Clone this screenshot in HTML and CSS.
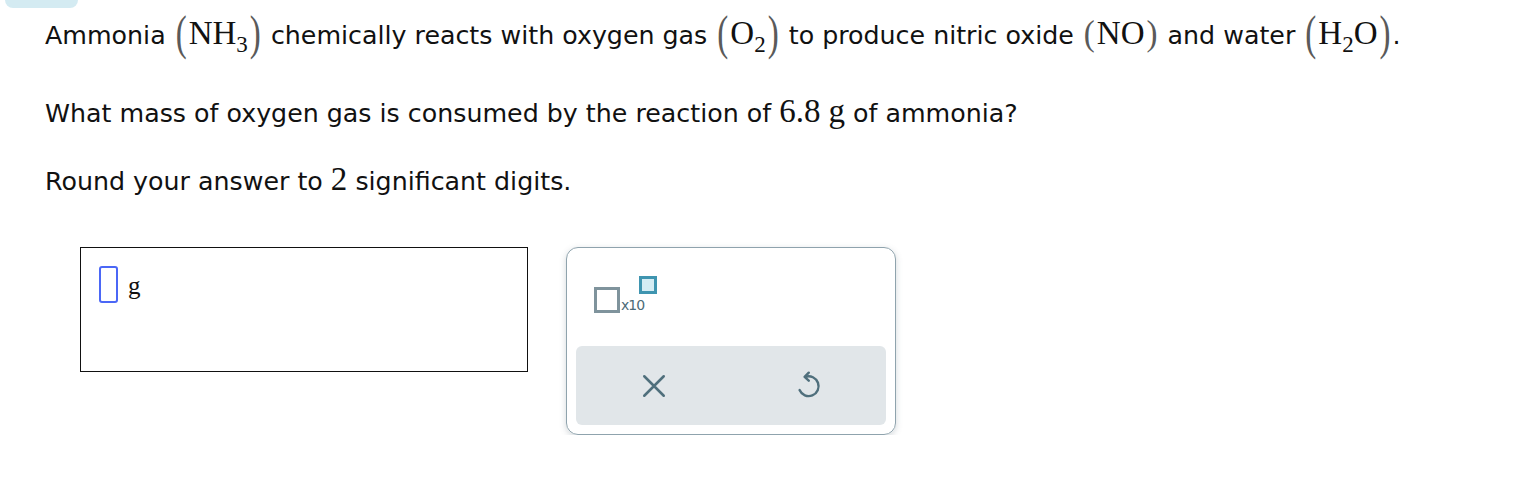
FILE: index.html
```html
<!DOCTYPE html>
<html>
<head>
<meta charset="utf-8">
<link rel="stylesheet" href="styles.css">
</head>
<body>
<div class="tab"></div>
<div class="content">
  <p class="line line1">Ammonia <span class="m"><span class="paren">(</span>NH<sub>3</sub><span class="paren">)</span></span> chemically reacts with oxygen gas <span class="m"><span class="paren">(</span>O<sub>2</sub><span class="paren">)</span></span> to produce nitric oxide <span class="m"><span class="paren sm">(</span>NO<span class="paren sm">)</span></span> and water <span class="m"><span class="paren">(</span>H<sub>2</sub>O<span class="paren">)</span></span>.</p>
  <p class="line line2">What mass of oxygen gas is consumed by the reaction of <span class="m">6.8</span> <span class="m">g</span> of ammonia?</p>
  <p class="line line3">Round your answer to <span class="m">2</span> significant digits.</p>
  <div class="answer-row">
    <div class="answer-box">
      <span class="slot"></span><span class="unit">g</span>
    </div>
    <div class="palette">
      <div class="palette-top">
        <span class="sci"><span class="sq"></span><span class="x10">x10</span><span class="sup-sq"></span></span>
      </div>
      <div class="palette-actions">
        <div class="act"><svg width="26" height="26" viewBox="0 0 24 24"><path d="M3 3 L21 21 M21 3 L3 21" fill="none" stroke="#4f6f7c" stroke-width="2.3" stroke-linecap="round"/></svg></div>
        <div class="act"><svg width="29" height="29" viewBox="0 0 24 24"><path d="M9.5 4.8 A8.2 8.2 0 1 1 4.6 15.8" fill="none" stroke="#4f6f7c" stroke-width="2" stroke-linecap="round"/><path d="M12.2 1.4 L8.8 4.8 L12.2 8" fill="none" stroke="#4f6f7c" stroke-width="2" stroke-linecap="round" stroke-linejoin="round"/></svg></div>
      </div>
    </div>
  </div>
</div>
</body>
</html>
```
FILE: styles.css
```css
html, body {
  margin: 0;
  padding: 0;
  background: #fff;
}
body {
  font-family: "DejaVu Sans", Verdana, sans-serif;
  color: #111;
}
.tab {
  margin-left: 5px;
  width: 73px;
  height: 8px;
  background: #d4ebf2;
  border-radius: 0 0 9px 9px;
}
.content {
  padding-left: 45px;
}
.line {
  margin: 0;
  font-size: 25.3px;
  white-space: nowrap;
}
.line1 {
  height: 58px;
  line-height: 50px;
  margin-top: 0;
}
.line2 {
  margin-top: 30px;
  line-height: 30px;
}
.line3 {
  margin-top: 35px;
  line-height: 30px;
}
.m {
  font-family: "Liberation Serif", "Times New Roman", serif;
  font-size: 33px;
}
.m sub {
  font-size: 23px;
  vertical-align: -8px;
  line-height: 0;
}
.paren {
  display: inline-block;
  color: #5a5a5a;
  transform: scaleY(1.45);
  margin: 0 2px;
}
.paren.sm {
  transform: scaleY(1.1);
}
.answer-row {
  display: flex;
  align-items: flex-start;
  gap: 38px;
  margin-top: 50px;
  margin-left: 35px;
}
.answer-box {
  width: 448px;
  height: 125px;
  border: 1px solid #111;
  display: flex;
  align-items: flex-start;
  padding: 18px 0 0 18px;
  box-sizing: border-box;
}
.slot {
  width: 19px;
  height: 37px;
  border: 2px solid #4b67f6;
  border-radius: 3px;
  box-sizing: border-box;
}
.unit {
  font-family: "Liberation Serif", "Times New Roman", serif;
  font-size: 25px;
  margin-left: 10px;
  margin-top: 6px;
}
.palette {
  width: 330px;
  height: 188px;
  border: 1px solid #8fa3ad;
  border-radius: 12px;
  box-sizing: border-box;
  box-shadow: 0 2px 6px rgba(80, 100, 110, 0.25);
  padding: 0 9px 9px 9px;
  display: flex;
  flex-direction: column;
}
.palette-top {
  height: 98px;
  padding: 28px 0 0 18px;
  box-sizing: border-box;
}
.sci {
  display: inline-flex;
  align-items: flex-end;
}
.sq {
  width: 26px;
  height: 26px;
  border: 3px solid #7f939c;
  box-sizing: border-box;
  margin-top: 11px;
}
.x10 {
  font-family: "DejaVu Sans", sans-serif;
  font-size: 14px;
  letter-spacing: -1px;
  color: #4c6b78;
  line-height: 14px;
  margin-left: 1px;
  margin-bottom: 1px;
}
.sup-sq {
  width: 18px;
  height: 18px;
  border: 3px solid #3f95b0;
  background: #d5edf4;
  box-sizing: border-box;
  align-self: flex-start;
  margin-left: -5px;
}
.palette-actions {
  flex: 1;
  background: #e1e6e9;
  border-radius: 6px;
  display: flex;
  align-items: center;
}
.act {
  flex: 1;
  display: flex;
  justify-content: center;
  align-items: center;
}
```
